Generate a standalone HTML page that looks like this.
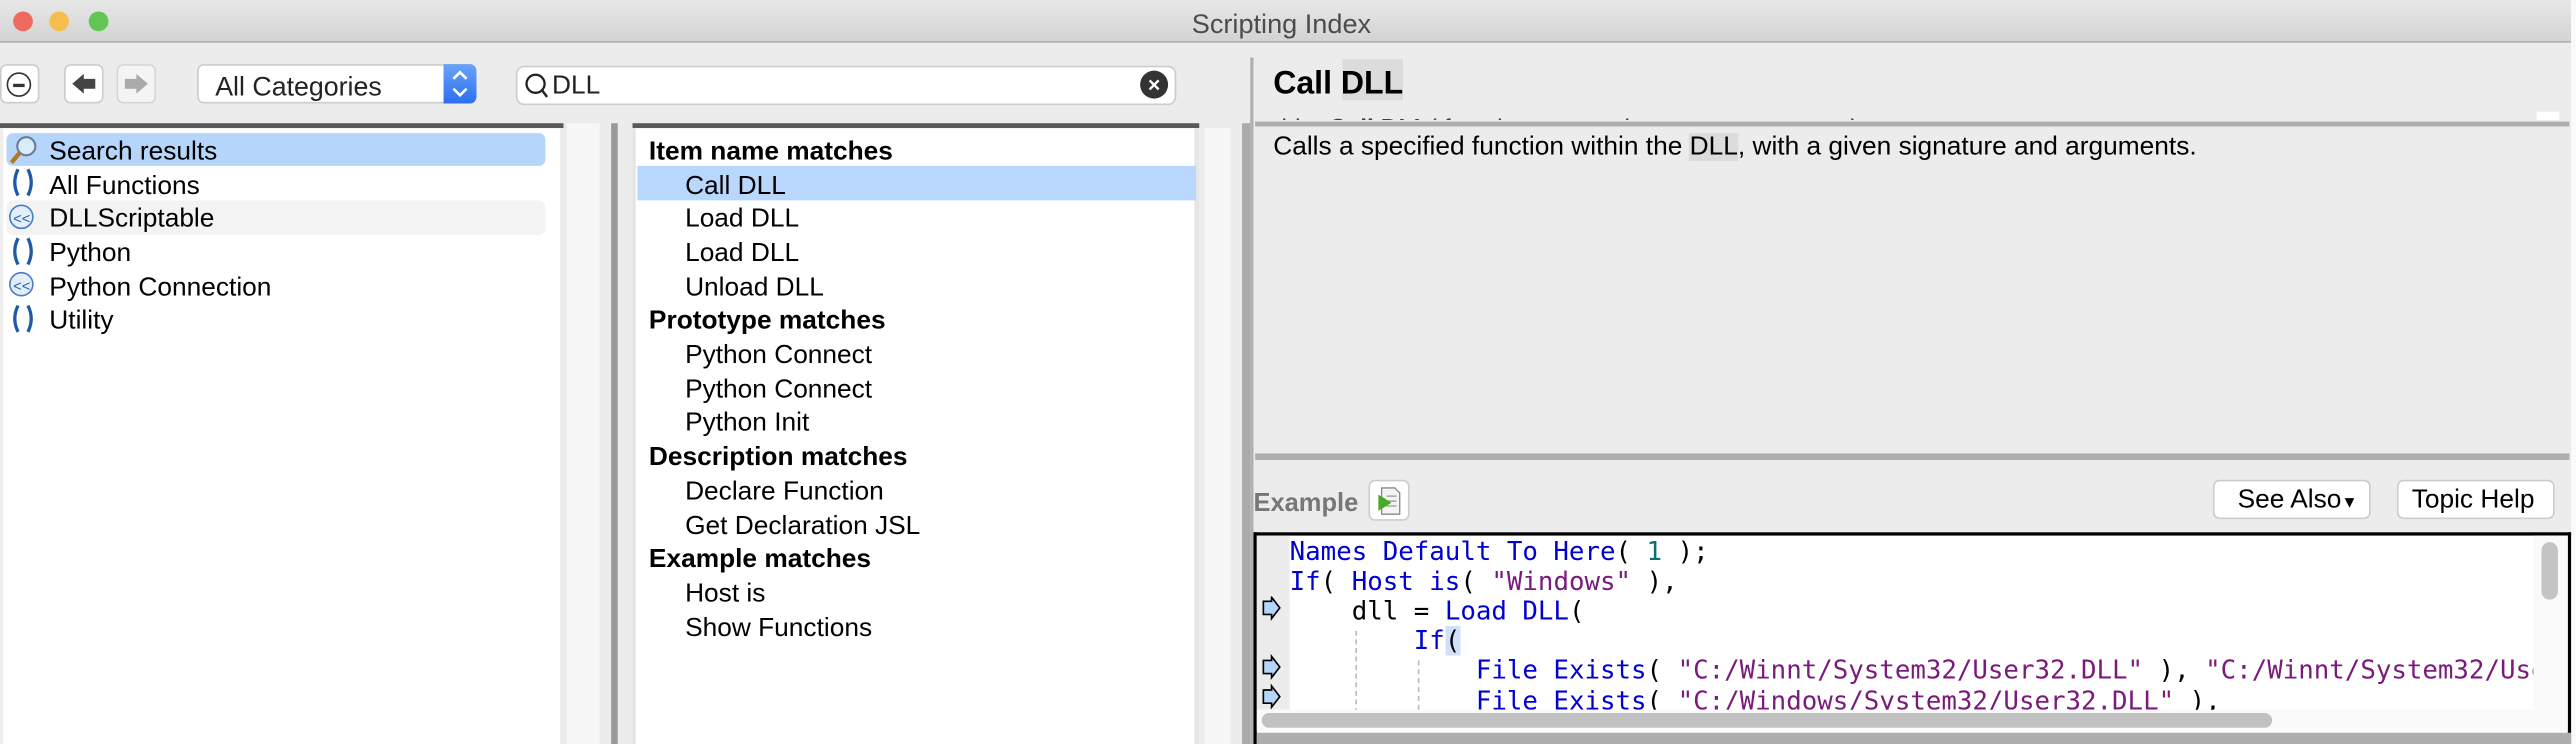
<!DOCTYPE html>
<html><head><meta charset="utf-8"><style>
*{margin:0;padding:0;box-sizing:border-box}
html,body{width:2576px;height:744px;overflow:hidden;background:#fff}
#w{position:absolute;left:0;top:0;width:1568px;height:453px;transform:scale(1.642857);transform-origin:0 0;font-family:"Liberation Sans",Arial,sans-serif;background:#ececec;overflow:hidden}
.a{position:absolute}
.t{position:absolute;font-size:16px;line-height:20px;color:#000;white-space:nowrap;margin-top:1.5px}
.b{font-weight:bold}
.mono{font-family:"DejaVu Sans Mono",monospace;font-size:15.7px;white-space:pre;position:absolute;line-height:18.2px}
.k{color:#0000d0}.s{color:#7a1a7a}.n{color:#087070}
</style></head><body><div id="w">
<!-- title bar -->
<div class="a" style="left:0;top:0;width:1565px;height:26px;background:linear-gradient(#e8e8e8,#d3d3d3);border-bottom:1px solid #b0b0b0"></div>
<div class="a" style="left:8px;top:7px;width:12px;height:12px;border-radius:50%;background:#ee6a5e"></div>
<div class="a" style="left:30px;top:7px;width:12px;height:12px;border-radius:50%;background:#f5be4f"></div>
<div class="a" style="left:54px;top:7px;width:12px;height:12px;border-radius:50%;background:#62c655"></div>
<div class="t" style="left:0;width:1560px;text-align:center;top:3px;color:#4c4c4c;font-size:16.5px">Scripting Index</div>
<div class="a" style="left:1565px;top:0;width:3px;height:453px;background:#fafafa"></div>
<!-- toolbar -->
<div class="a" style="left:0;top:39px;width:24px;height:24px;background:#fff;border:1px solid #ccc;border-radius:4px"></div>
<div class="a" style="left:4px;top:44px;width:15px;height:15px;border:1.3px solid #333;border-radius:50%"></div>
<div class="a" style="left:8px;top:51px;width:7px;height:1.5px;background:#333"></div>
<div class="a" style="left:39px;top:39px;width:24px;height:24px;background:#fff;border:1px solid #ccc;border-radius:4px"></div>
<svg class="a" style="left:42px;top:43px" width="18" height="16"><path d="M2 8 L9 2 V5 H16 V11 H9 V14 Z" fill="#444"/></svg>
<div class="a" style="left:71px;top:39px;width:24px;height:24px;background:#f4f4f4;border:1px solid #d6d6d6;border-radius:4px"></div>
<svg class="a" style="left:74px;top:43px" width="18" height="16"><path d="M16 8 L9 2 V5 H2 V11 H9 V14 Z" fill="#aaa"/></svg>
<div class="a" style="left:120px;top:39px;width:170px;height:24px;background:#fff;border:1px solid #ccc;border-radius:4px"></div>
<div class="t" style="left:131px;top:41px;font-size:16.3px;color:#222">All Categories</div>
<div class="a" style="left:270px;top:39px;width:20px;height:24px;background:linear-gradient(#6aa3f8,#2a6ff0);border-radius:0 4px 4px 0"></div>
<svg class="a" style="left:273px;top:42px" width="14" height="18"><path d="M3 6 L7 2 L11 6 M3 12 L7 16 L11 12" stroke="#fff" stroke-width="1.6" fill="none"/></svg>
<div class="a" style="left:314px;top:40px;width:402px;height:24px;background:#fff;border:1px solid #ccc;border-radius:5px"></div>
<svg class="a" style="left:318px;top:43px" width="18" height="18"><circle cx="8" cy="8" r="5.5" stroke="#222" stroke-width="1.4" fill="none"/><path d="M12 12 L15 16" stroke="#222" stroke-width="1.5"/></svg>
<div class="t" style="left:336px;top:41px;font-size:16px;color:#222">DLL</div>
<div class="a" style="left:694px;top:43px;width:17px;height:17px;border-radius:50%;background:#333"></div>
<div class="t b" style="left:694px;top:40px;width:17px;text-align:center;color:#fff;font-size:13px">×</div>
<!-- left pane -->
<div class="a" style="left:0;top:75px;width:343px;height:3px;background:#5a5a5a"></div>
<div class="a" style="left:0;top:78px;width:343px;height:375px;background:#fff;border-left:2px solid #eee;border-right:2px solid #eaeaea"></div>
<div class="a" style="left:345px;top:75px;width:20px;height:378px;background:#f7f7f7"></div>
<div class="a" style="left:372px;top:75px;width:4px;height:378px;background:#999"></div>
<div class="a" style="left:4px;top:81px;width:328px;height:20px;background:#b5d5fb;border-radius:4px"></div>
<div class="a" style="left:4px;top:122px;width:328px;height:21px;background:#f3f3f3;border-radius:4px"></div>
<svg class="a" style="left:4px;top:81px" width="20" height="20"><circle cx="12" cy="8" r="5.5" fill="#d8ecfb" stroke="#6a7f92" stroke-width="1.3"/><path d="M8 12 L3 18" stroke="#b07a18" stroke-width="2.6"/></svg>
<div class="t" style="left:30px;top:81px">Search results</div>
<svg class="a" style="left:6px;top:102px" width="16" height="18"><path d="M5 1 Q1 9 5 17 M11 1 Q15 9 11 17" stroke="#1e5aa8" stroke-width="2" fill="none"/></svg>
<div class="t" style="left:30px;top:102px">All Functions</div>
<svg class="a" style="left:5px;top:124px" width="16" height="16"><circle cx="8" cy="8" r="7" fill="#e4eefa" stroke="#4a7fc4" stroke-width="1"/><text x="3" y="12" font-size="9" fill="#2a5fb0" font-family="Liberation Sans">&lt;&lt;</text></svg>
<div class="t" style="left:30px;top:122px">DLLScriptable</div>
<svg class="a" style="left:6px;top:144px" width="16" height="18"><path d="M5 1 Q1 9 5 17 M11 1 Q15 9 11 17" stroke="#1e5aa8" stroke-width="2" fill="none"/></svg>
<div class="t" style="left:30px;top:143px">Python</div>
<svg class="a" style="left:5px;top:165px" width="16" height="16"><circle cx="8" cy="8" r="7" fill="#e4eefa" stroke="#4a7fc4" stroke-width="1"/><text x="3" y="12" font-size="9" fill="#2a5fb0" font-family="Liberation Sans">&lt;&lt;</text></svg>
<div class="t" style="left:30px;top:164px">Python Connection</div>
<svg class="a" style="left:6px;top:185px" width="16" height="18"><path d="M5 1 Q1 9 5 17 M11 1 Q15 9 11 17" stroke="#1e5aa8" stroke-width="2" fill="none"/></svg>
<div class="t" style="left:30px;top:184px">Utility</div>
<!-- middle -->
<div class="a" style="left:385px;top:75px;width:345px;height:3px;background:#5a5a5a"></div>
<div class="a" style="left:385px;top:78px;width:345px;height:375px;background:#fff;border-left:2px solid #e6e6e6;border-right:3px solid #e6e6e6"></div>
<div class="a" style="left:733px;top:78px;width:16px;height:375px;background:#f7f7f7"></div>
<div class="a" style="left:756px;top:75px;width:5px;height:378px;background:#aaa"></div>
<div class="a" style="left:388px;top:101px;width:340px;height:21px;background:#b9d7fc"></div>
<div class="t b" style="left:395px;top:81px">Item name matches</div>
<div class="t" style="left:417px;top:102px">Call DLL</div>
<div class="t" style="left:417px;top:122px">Load DLL</div>
<div class="t" style="left:417px;top:143px">Load DLL</div>
<div class="t" style="left:417px;top:164px">Unload DLL</div>
<div class="t b" style="left:395px;top:184px">Prototype matches</div>
<div class="t" style="left:417px;top:205px">Python Connect</div>
<div class="t" style="left:417px;top:226px">Python Connect</div>
<div class="t" style="left:417px;top:246px">Python Init</div>
<div class="t b" style="left:395px;top:267px">Description matches</div>
<div class="t" style="left:417px;top:288px">Declare Function</div>
<div class="t" style="left:417px;top:309px">Get Declaration JSL</div>
<div class="t b" style="left:395px;top:329px">Example matches</div>
<div class="t" style="left:417px;top:350px">Host is</div>
<div class="t" style="left:417px;top:371px">Show Functions</div>
<!-- right -->
<div class="a" style="left:761px;top:35px;width:2px;height:418px;background:#b0b0b0"></div>
<div class="a" style="left:817px;top:36px;width:37px;height:25px;background:#dcdcdc"></div>
<div class="t b" style="left:775px;top:38px;font-size:19.5px;line-height:22px">Call DLL</div>
<div class="a" style="left:775px;top:70px;width:470px;height:3px;overflow:hidden"><div style="font-size:15px;line-height:18px;color:#222;white-space:nowrap">dd = <b>Call DLL</b>( function name, signature, arguments )</div></div>
<div class="a" style="left:1544px;top:68px;width:14px;height:5px;background:#fff"></div>
<div class="a" style="left:764px;top:74px;width:800px;height:3px;background:#aeaeae"></div>
<div class="t" style="left:775px;top:78px">Calls a specified function within the <span style="background:#dcdcdc">DLL</span>, with a given signature and arguments.</div>
<div class="a" style="left:764px;top:276px;width:800px;height:4px;background:#aeaeae"></div>
<div class="t b" style="left:763px;top:295px;color:#777;font-size:15.5px">Example</div>
<div class="a" style="left:833px;top:292px;width:25px;height:25px;background:#fff;border:1px solid #ccc;border-radius:4px"></div>
<svg class="a" style="left:836px;top:295px" width="20" height="20"><path d="M5 2 H13 L16 5 V18 H5 Z" fill="#f4f4f4" stroke="#888" stroke-width=".8"/><path d="M8 7 H14 M8 10 H14 M8 13 H14" stroke="#999" stroke-width=".8"/><path d="M3 6 L11 11 L3 16 Z" fill="#4aa82a"/></svg>
<div class="a" style="left:1347px;top:292px;width:96px;height:24px;background:#fff;border:1px solid #ccc;border-radius:4px"></div>
<div class="t" style="left:1362px;top:293px;font-size:16px">See Also<span style="font-size:10px">▼</span></div>
<div class="a" style="left:1459px;top:292px;width:96px;height:24px;background:#fff;border:1px solid #ccc;border-radius:4px"></div>
<div class="t" style="left:1468px;top:293px;font-size:16px">Topic Help</div>
<!-- code -->
<div class="a" style="left:763px;top:324px;width:802px;height:129px;background:#fff;border:2px solid #000;border-bottom:none"></div>
<div class="a" style="left:765px;top:326px;width:20px;height:106px;background:#ececec"></div>
<div class="a" style="left:1542px;top:326px;width:21px;height:106px;background:#fafafa"></div>
<div class="a" style="left:1547px;top:330px;width:10px;height:35px;background:#c4c4c4;border-radius:5px"></div>
<div class="a" style="left:765px;top:432px;width:798px;height:13px;background:#fafafa"></div>
<div class="a" style="left:768px;top:434px;width:615px;height:9px;background:#c1c1c1;border-radius:5px"></div>
<div class="a" style="left:765px;top:446px;width:800px;height:7px;background:#aeaeae"></div>
<div class="a" style="left:785px;top:326px;width:757px;height:106px;overflow:hidden">
<div class="a" style="left:95px;top:55px;width:9px;height:18px;background:#cfe0f8"></div>
<div class="a" style="left:40px;top:58px;border-left:1px dashed #bbb;height:50px"></div>
<div class="a" style="left:78px;top:76px;border-left:1px dashed #bbb;height:30px"></div>
<div class="mono" style="left:0;top:0.5px"><span class="k">Names Default To Here</span>( <span class="n">1</span> );
<span class="k">If</span>( <span class="k">Host is</span>( <span class="s">"Windows"</span> ),
    dll = <span class="k">Load DLL</span>(
        <span class="k">If</span>(
            <span class="k">File Exists</span>( <span class="s">"C:/Winnt/System32/User32.DLL"</span> ), <span class="s">"C:/Winnt/System32/User32.DLL"</span>,
            <span class="k">File Exists</span>( <span class="s">"C:/Windows/System32/User32.DLL"</span> ),</div>
</div>
<svg class="a" style="left:767px;top:363px" width="14" height="70"><g fill="#b5d5fb" stroke="#000" stroke-width="1"><path d="M2 3 H7 V0.5 L12 7 L7 13.5 V11 H2 Z"/><path d="M2 39 H7 V36.5 L12 43 L7 49.5 V47 H2 Z"/><path d="M2 57 H7 V54.5 L12 61 L7 67.5 V65 H2 Z"/></g></svg>
</div></body></html>
